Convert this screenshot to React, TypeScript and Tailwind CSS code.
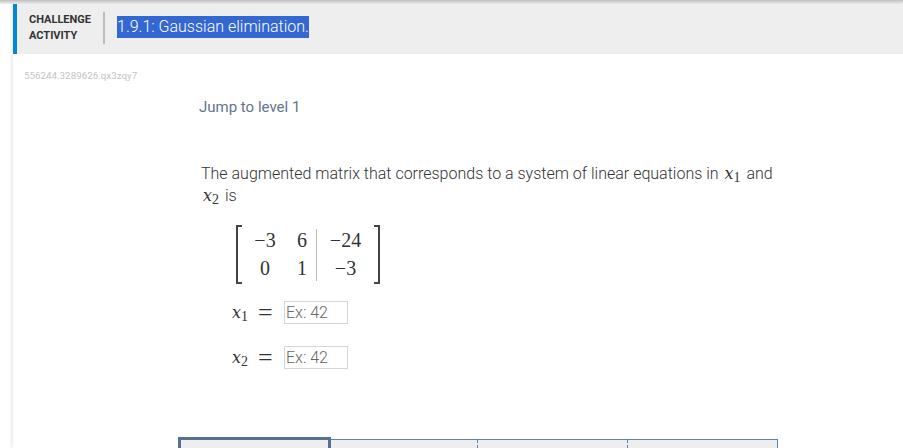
import React from 'react';

const MATH = "font-['Liberation_Serif',serif] text-[#333333]";

// x with a subscript, as the math typesetter draws it
const Var = ({ n }: { n: number }) => (
  <span className={`${MATH} inline-flex items-baseline mx-[2px] leading-none`}>
    <i className="font-['DejaVu_Serif',serif] text-[16px] leading-none">x</i>
    <span className="relative top-[3px] text-[14px] leading-none">{n}</span>
  </span>
);

const ROWS = [
  ['−3', '6', '−24'],
  ['0', '1', '−3'],
];

const Matrix = () => (
  <div className={`${MATH} flex h-[59px] w-[144px] text-[20px] leading-none`}>
    <div className="h-full w-[6px] border-y-2 border-l-2 border-[#444444]" />
    <div className="flex-1 flex pt-[5px]">
      <div className="w-[46px] flex flex-col gap-[8px]">
        {ROWS.map((r) => (
          <span key={r[0]} className="w-full text-center">{r[0]}</span>
        ))}
      </div>
      <div className="w-[28px] flex flex-col gap-[8px]">
        {ROWS.map((r) => (
          <span key={r[1]} className="w-full text-center">{r[1]}</span>
        ))}
      </div>
      <div className="w-[1px] h-[52px] -mt-[1px] bg-[#bbbbbb]" />
      <div className="flex-1 flex flex-col gap-[8px]">
        {ROWS.map((r) => (
          <span key={r[2]} className="w-full text-center">{r[2]}</span>
        ))}
      </div>
    </div>
    <div className="h-full w-[6px] border-y-2 border-r-2 border-[#444444]" />
  </div>
);

const Answer = ({ n }: { n: number }) => (
  <div className="flex items-center h-[23px]">
    <div className="w-[26px] -ml-[2px] mr-[2px]"><Var n={n} /></div>
    <span className={`${MATH} text-[26px] leading-none w-[26px]`}>=</span>
    <input
      readOnly
      placeholder="Ex: 42"
      className="w-[64px] h-[23px] border border-[#cfd8dc] bg-white px-[1px] text-[16px] font-light placeholder:text-[#666666] outline-none"
    />
  </div>
);

export default function App() {
  return (
    <div className="h-[448px] w-[903px] overflow-hidden bg-white font-['Roboto',sans-serif]">
      <div className="h-[4px] bg-gradient-to-b from-[#bdbdbd] to-[#f2f2f2]" />
      <div className="ml-[13px] h-[444px] flex flex-col shadow-[-2px_0_3px_rgba(0,0,0,0.08)]">
        <header className="h-[50px] shrink-0 flex items-center bg-[#eeeeee] border-l-[4px] border-[#0288d1]">
          <div className="w-[86px] pl-[12px] -mt-[2px] text-[11px] font-bold leading-[16px] text-[#333333]">
            <div>CHALLENGE</div>
            <div>ACTIVITY</div>
          </div>
          <div className="w-[2px] h-[32px] bg-[#bdbdbd] -mt-[2px]" />
          <h1 className="ml-[12px] -mt-[5px] h-[22px] px-0 bg-[#3367d1] text-[16px] font-light leading-[22px] text-white">
            1.9.1: Gaussian elimination.
          </h1>
        </header>

        <div className="mt-[16px] ml-[11px] text-[9.8px] leading-[11px] text-[#c4c4c4]">556244.3289626.qx3zqy7</div>

        <div className="mt-[17px] ml-[186px] text-[15px] leading-[18px] text-[#5f7590]">Jump to level 1</div>

        <div className="mt-[47px] ml-[188px] w-[580px] text-[16px] font-light leading-[22px] text-[#333333]">
          <p>
            The augmented matrix that corresponds to a system of linear equations in <Var n={1} /> and <Var n={2} /> is
          </p>
        </div>

        <div className="mt-[18px] ml-[223px]">
          <Matrix />
        </div>

        <div className="mt-[17px] ml-[219px] flex flex-col gap-[22px]">
          <Answer n={1} />
          <Answer n={2} />
        </div>

        <div className="mt-auto ml-[165px] w-[600px] h-[11px] flex items-end shrink-0">
          <div className="w-[153px] h-[11px] bg-[#eeeeee] border-x-[3px] border-t-[3px] border-[#56708f]" />
          <div className="flex-1 h-[9px] flex bg-[#eeeeee] border-t border-r border-[#5f82ab]">
            <div className="w-[147px] border-r border-dashed border-[#5f82ab]" />
            <div className="w-[150px] border-r border-dashed border-[#5f82ab]" />
          </div>
        </div>
      </div>
    </div>
  );
}
